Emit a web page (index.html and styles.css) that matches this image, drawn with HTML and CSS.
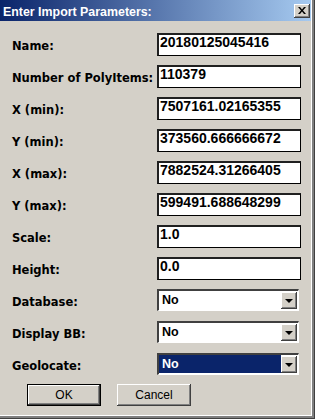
FILE: index.html
```html
<!DOCTYPE html>
<html>
<head>
<meta charset="utf-8">
<link rel="stylesheet" href="styles.css">
</head>
<body>
<div class="window">
  <div class="titlebar">
    <span class="title">Enter Import Parameters:</span>
    <span class="close"><svg width="8" height="7" viewBox="0 0 8 7"><path d="M0 0h2l2 2.5L6 0h2L5 3.5 8 7H6L4 4.5 2 7H0l3-3.5z" fill="#000"/></svg></span>
  </div>
  <div class="form">
    <div class="label">Name:</div><div class="field">20180125045416</div>
    <div class="label">Number of PolyItems:</div><div class="field">110379</div>
    <div class="label">X (min):</div><div class="field">7507161.02165355</div>
    <div class="label">Y (min):</div><div class="field">373560.666666672</div>
    <div class="label">X (max):</div><div class="field">7882524.31266405</div>
    <div class="label">Y (max):</div><div class="field">599491.688648299</div>
    <div class="label">Scale:</div><div class="field">1.0</div>
    <div class="label">Height:</div><div class="field">0.0</div>
    <div class="label">Database:</div>
    <div class="combo"><span class="value">No</span><span class="arrow"></span></div>
    <div class="label">Display BB:</div>
    <div class="combo"><span class="value">No</span><span class="arrow"></span></div>
    <div class="label">Geolocate:</div>
    <div class="combo"><span class="value selected">No</span><span class="arrow"></span></div>
  </div>
  <div class="buttons">
    <div class="btn default">OK</div>
    <div class="btn">Cancel</div>
  </div>
</div>
</body>
</html>
```
FILE: styles.css
```css
html, body {
  margin: 0;
  padding: 0;
  background: #d4d0c8;
}
.window {
  width: 315px;
  height: 419px;
  box-sizing: border-box;
  background: #d4d0c8;
  display: flex;
  flex-direction: column;
  box-shadow: inset -1px -1px 0 #404040, inset -3px -3px 0 #808080, inset -4px -4px 0 #ffffff;
}
.titlebar {
  height: 21px;
  margin-right: 4px;
  background: linear-gradient(to right, #0a246a, #a6caf0);
  display: flex;
  align-items: center;
  justify-content: space-between;
  padding: 0 1px 0 3px;
}
.title {
  color: #fff;
  font-family: "Liberation Sans", Arial, sans-serif;
  font-weight: bold;
  font-size: 12.4px;
  padding-top: 3px;
}
.close {
  width: 16px;
  height: 14px;
  box-sizing: border-box;
  background: #d4d0c8;
  display: flex;
  align-items: center;
  justify-content: center;
  box-shadow: inset -1px -1px 0 #404040, inset 1px 1px 0 #fff, inset -2px -2px 0 #808080;
}
.form {
  margin-top: 12px;
  padding-left: 12px;
  display: grid;
  grid-template-columns: 145px 144px;
  grid-auto-rows: 23px;
  row-gap: 9px;
}
.label {
  font-family: "DejaVu Sans", Verdana, sans-serif;
  font-weight: bold;
  font-size: 11.5px;
  line-height: 23px;
  padding-top: 2px;
  color: #000;
  white-space: nowrap;
}
.field {
  box-sizing: border-box;
  height: 23px;
  background: #fff;
  border: 1px solid #000;
  border-top: 2px solid #202020;
  border-left: 2px solid #202020;
  padding-left: 1px;
  font-family: "Liberation Sans", Arial, sans-serif;
  font-weight: bold;
  font-size: 14px;
  line-height: 15px;
  color: #000;
}
.combo {
  box-sizing: border-box;
  width: 142px;
  height: 22px;
  background: #fff;
  border-top: 2px solid #404040;
  border-left: 2px solid #404040;
  border-right: 1px solid #fff;
  border-bottom: 1px solid #fff;
  display: flex;
  padding: 0 1px 1px 0;
}
.value {
  flex: 1;
  font-family: "Liberation Sans", Arial, sans-serif;
  font-weight: bold;
  font-size: 12.5px;
  line-height: 19px;
  padding-left: 3px;
  color: #000;
}
.value.selected {
  background: #0a246a;
  color: #fff;
}
.arrow {
  width: 16px;
  box-sizing: border-box;
  background: #d4d0c8;
  box-shadow: inset -1px -1px 0 #404040, inset 1px 1px 0 #fff, inset -2px -2px 0 #808080;
  display: flex;
  align-items: center;
  justify-content: center;
  margin: 1px 0 0 0;
}
.arrow::after {
  content: "";
  width: 0;
  height: 0;
  border-left: 4px solid transparent;
  border-right: 4px solid transparent;
  border-top: 4px solid #000;
  margin-right: 1px;
}
.buttons {
  margin-top: 8px;
  padding-left: 27px;
  display: flex;
  gap: 16px;
}
.btn {
  width: 74px;
  height: 22px;
  box-sizing: border-box;
  background: #d4d0c8;
  font-family: "Liberation Sans", Arial, sans-serif;
  font-size: 12px;
  color: #000;
  display: flex;
  align-items: center;
  justify-content: center;
  box-shadow: inset -1px -1px 0 #404040, inset 1px 1px 0 #fff, inset -2px -2px 0 #808080;
}
.btn.default {
  border: 1px solid #000;
}
```
